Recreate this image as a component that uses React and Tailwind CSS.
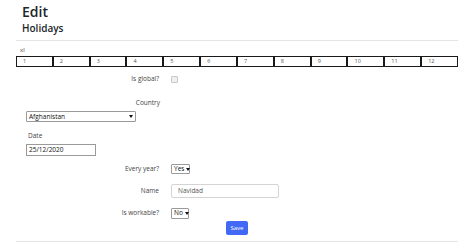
import React from "react";

const cols = [1, 2, 3, 4, 5, 6, 7, 8, 9, 10, 11, 12];

const Caret = () => (
  <svg width="4" height="3" viewBox="0 0 4 3" className="shrink-0">
    <path d="M0 0 L4 0 L2 3 Z" fill="#111" />
  </svg>
);

const FakeSelect = ({ value, className }) => (
  <div
    className={`flex items-center justify-between border border-[#9a9a9a] rounded-[1px] bg-white px-[2px] text-[6.5px] text-[#111] ${className}`}
  >
    <span>{value}</span>
    <Caret />
  </div>
);

const Row = ({ label, className, children }) => (
  <div className={`flex items-center ${className}`}>
    <div className="w-[160px] pr-[1px] text-right text-[6.5px] text-[#444]">{label}</div>
    <div className="ml-[11px] flex items-center">{children}</div>
  </div>
);

const App = () => {
  return (
    <div
      className="w-[474px] h-[244px] overflow-hidden bg-white text-[#212529]"
      style={{ fontFamily: '"Open Sans", "Noto Sans", sans-serif' }}
    >
      {/* Header */}
      <div className="px-[22px] pt-[3px]">
        <h1 className="text-[14px] leading-[17px] font-semibold">Edit</h1>
        <h2 className="mt-[1px] text-[10px] leading-[14px] font-semibold">Holidays</h2>
      </div>
      <div className="mx-[16px] mt-[5px] border-t border-[#e5e5e5]"></div>

      {/* Breakpoint grid */}
      <div className="ml-[20px] mt-[5px] text-[6px] leading-[8px] text-[#444]">xl</div>
      <div className="mx-[16px] mt-[2px] grid grid-cols-12 h-[11px]">
        {cols.map((n) => (
          <div
            key={n}
            className="border border-[#1a1a1a] pl-[6px] text-[5.5px] leading-[9px] text-[#555]"
          >
            {n}
          </div>
        ))}
      </div>

      {/* Form */}
      <Row label="Is global?" className="mt-[6px] h-[12px]">
        <div className="w-[7px] h-[7px] border border-[#c8c8c8] bg-[#f0f0f0] rounded-[1px]"></div>
      </Row>

      <div className="mt-[12px] h-[12px] flex items-center">
        <div className="w-[160px] text-right text-[6.5px] text-[#444]">Country</div>
      </div>
      <FakeSelect value="Afghanistan" className="ml-[26px] mt-[2px] w-[110px] h-[11px]" />

      <div className="ml-[28px] mt-[9px] h-[10px] flex items-center text-[6.5px] text-[#444]">
        Date
      </div>
      <div className="ml-[26px] mt-[3px] w-[70px] h-[12px] border border-[#9a9a9a] flex items-center px-[2px] text-[6.5px] text-[#111]">
        25/12/2020
      </div>

      <Row label="Every year?" className="mt-[7px] h-[12px]">
        <FakeSelect value="Yes" className="w-[19px] h-[10px] gap-[2px]" />
      </Row>

      <Row label="Name" className="mt-[9px] h-[14px]">
        <div className="w-[108px] h-[14px] border border-[#d4d4d4] rounded-[2px] flex items-center pl-[6px] text-[6.5px] text-[#555]">
          Navidad
        </div>
      </Row>

      <Row label="Is workable?" className="mt-[9px] h-[12px]">
        <FakeSelect value="No" className="w-[18px] h-[11px] gap-[2px]" />
      </Row>

      <div className="ml-[226px] mt-[2px] w-[22px] h-[14px] rounded-[2px] bg-[#4169f5] flex items-center justify-center text-[6px] text-white">
        Save
      </div>

      <div className="mx-[16px] mt-[6px] border-t border-[#e5e5e5]"></div>
    </div>
  );
};

export default App;
